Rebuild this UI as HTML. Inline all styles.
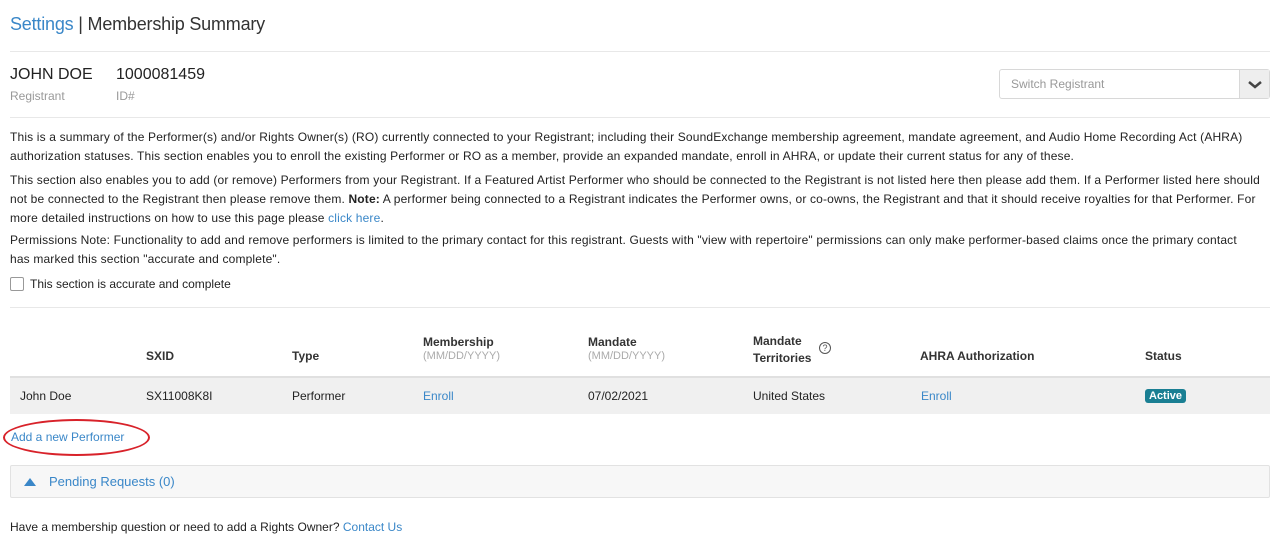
<!DOCTYPE html>
<html><head><style>
*{margin:0;padding:0;box-sizing:border-box}
body{width:1280px;height:542px;background:#fff;font-family:"Liberation Sans",sans-serif;color:#222;position:relative;overflow:hidden}
.a{position:absolute;white-space:nowrap}
a{color:#3a87c8;text-decoration:none}
.hr{position:absolute;left:10px;width:1260px;height:1px;background:#e8e8e8}
p.t{position:absolute;left:10px;width:1262px;font-size:12px;line-height:19px;color:#222;letter-spacing:0.16px}
.th{font-size:12px;font-weight:bold;color:#333}
.sub{font-size:11px;color:#aaa}
.td{font-size:12px;color:#222}
</style></head><body>
<div class="a" style="left:10px;top:14px;font-size:18px;color:#333;letter-spacing:-0.2px"><a>Settings</a> | Membership Summary</div>
<div class="hr" style="top:51px"></div>
<div class="a" style="left:10px;top:66px;font-size:16px;color:#222">JOHN DOE</div>
<div class="a" style="left:116px;top:66px;font-size:16px;color:#222">1000081459</div>
<div class="a" style="left:10px;top:89px;font-size:12px;color:#999">Registrant</div>
<div class="a" style="left:116px;top:89px;font-size:12px;color:#999">ID#</div>
<div style="position:absolute;left:999px;top:69px;width:271px;height:30px;border:1px solid #d8d8d8;border-radius:3px">
<div class="a" style="left:11px;top:7px;font-size:12px;color:#999">Switch Registrant</div>
<div style="position:absolute;right:0;top:0;width:30px;height:28px;background:#eee;border-left:1px solid #d8d8d8">
<svg width="30" height="28"><path d="M9 12l6 5 6-5" stroke="#444" stroke-width="2.5" fill="none"/></svg></div></div>
<div class="hr" style="top:117px"></div>
<p class="t" style="top:128px">This is a summary of the Performer(s) and/or Rights Owner(s) (RO) currently connected to your Registrant; including their SoundExchange membership agreement, mandate agreement, and Audio Home Recording Act (AHRA) authorization statuses. This section enables you to enroll the existing Performer or RO as a member, provide an expanded mandate, enroll in AHRA, or update their current status for any of these.</p>
<p class="t" style="top:171px">This section also enables you to add (or remove) Performers from your Registrant. If a Featured Artist Performer who should be connected to the Registrant is not listed here then please add them. If a Performer listed here should not be connected to the Registrant then please remove them. <b>Note:</b> A performer being connected to a Registrant indicates the Performer owns, or co-owns, the Registrant and that it should receive royalties for that Performer. For more detailed instructions on how to use this page please <a>click here</a>.</p>
<p class="t" style="top:231px;width:1250px">Permissions Note: Functionality to add and remove performers is limited to the primary contact for this registrant. Guests with "view with repertoire" permissions can only make performer-based claims once the primary contact has marked this section "accurate and complete".</p>
<div style="position:absolute;left:10px;top:277px;width:14px;height:14px;border:1px solid #999;border-radius:2px"></div>
<div class="a" style="left:30px;top:277px;font-size:12px">This section is accurate and complete</div>
<div class="hr" style="top:307px"></div>
<div class="a th" style="left:146px;top:349px">SXID</div>
<div class="a th" style="left:292px;top:349px">Type</div>
<div class="a th" style="left:423px;top:335px">Membership</div>
<div class="a sub" style="left:423px;top:350px">(MM/DD/YYYY)</div>
<div class="a th" style="left:588px;top:335px">Mandate</div>
<div class="a sub" style="left:588px;top:350px">(MM/DD/YYYY)</div>
<div class="a th" style="left:753px;top:333px;line-height:17px">Mandate<br>Territories</div>
<div style="position:absolute;left:819px;top:342px;width:12px;height:12px;border:1px solid #555;border-radius:50%;font-size:9px;line-height:10px;text-align:center;color:#555">?</div>
<div class="a th" style="left:920px;top:349px">AHRA Authorization</div>
<div class="a th" style="left:1145px;top:349px">Status</div>
<div style="position:absolute;left:10px;top:376px;width:1260px;height:38px;background:#f0f0f0;border-top:2px solid #e0e0e0"></div>
<div class="a td" style="left:20px;top:389px">John Doe</div>
<div class="a td" style="left:146px;top:389px">SX11008K8I</div>
<div class="a td" style="left:292px;top:389px">Performer</div>
<div class="a td" style="left:423px;top:389px"><a>Enroll</a></div>
<div class="a td" style="left:588px;top:389px">07/02/2021</div>
<div class="a td" style="left:753px;top:389px">United States</div>
<div class="a td" style="left:921px;top:389px"><a>Enroll</a></div>
<div class="a" style="left:1145px;top:389px;background:#1a7f93;color:#fff;font-size:11px;font-weight:bold;padding:1px 4px;border-radius:3px">Active</div>
<div class="a" style="left:11px;top:430px;font-size:12px"><a>Add a new Performer</a></div>
<div style="position:absolute;left:3px;top:419px;width:147px;height:37px;border:2px solid #d8222a;border-radius:50%"></div>
<div style="position:absolute;left:10px;top:465px;width:1260px;height:33px;background:#f7f7f7;border:1px solid #e2e2e2;border-radius:2px">
<svg style="position:absolute;left:12px;top:10px" width="14" height="12"><path d="M1 10L7 2l6 8z" fill="#3a87c8"/></svg>
<div class="a" style="left:38px;top:8px;font-size:13px;color:#3a87c8">Pending Requests (0)</div></div>
<div class="a" style="left:10px;top:520px;font-size:12px">Have a membership question or need to add a Rights Owner? <a>Contact Us</a></div>
</body></html>
